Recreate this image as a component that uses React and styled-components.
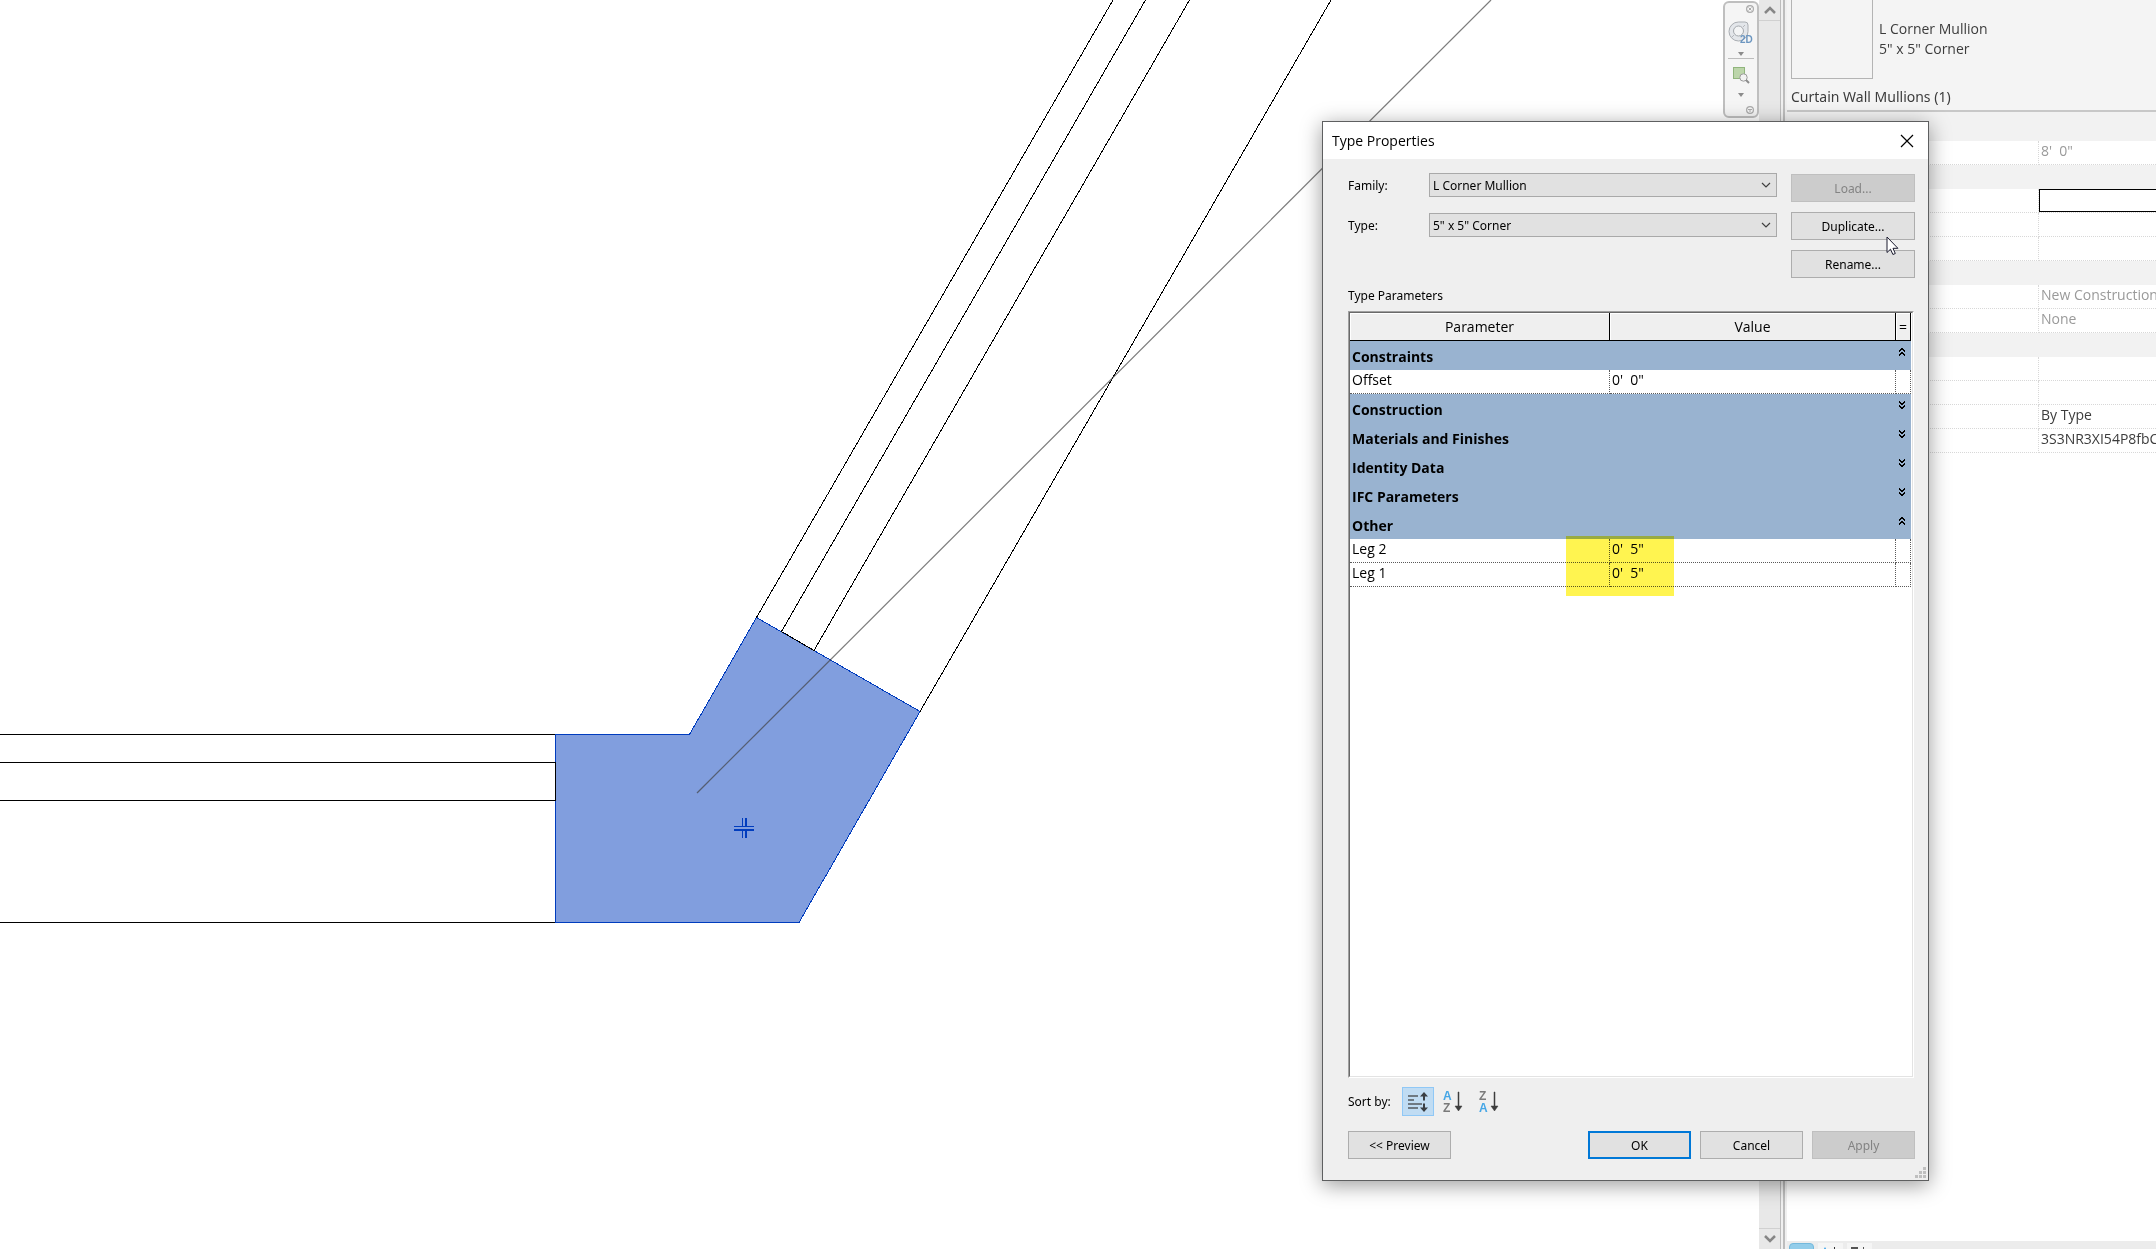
import React, { useState } from 'react';
import styled, { createGlobalStyle } from 'styled-components';

const GlobalStyle = createGlobalStyle`
  * {
    box-sizing: border-box;
  }

  body {
    margin: 0;
    overflow: hidden;
    background: #fff;
    color: #000;
    font-family: 'Open Sans', 'Noto Sans', sans-serif;
    font-size: 14px;
  }

  button, select, input {
    margin: 0;
    padding: 0;
    border: 0;
    border-radius: 0;
    font: inherit;
    color: inherit;
  }
`;

const Workspace = styled.div`
  position: relative;
  display: flex;
  height: 100vh;
  overflow: hidden;
`;

/* drawing area */

const Canvas = styled.main`
  flex: 1;
  min-width: 0;
  display: flex;
  justify-content: space-between;
  overflow: hidden;
`;

const Drawing = styled.svg`
  flex: 1;
  min-width: 0;
  height: 100%;
`;

const NavBar = styled.nav`
  flex: none;
  width: 36px;
  height: 117px;
  margin-top: 1px;
  display: flex;
  flex-direction: column;
  align-items: center;
  border: 2px solid #bfbfbf;
  border-radius: 6px;
  background: #f5f5f5;

  > :last-child {
    margin-top: auto;
  }
`;

const NavButton = styled.button`
  flex: none;
  display: flex;
  justify-content: ${props => props.$end ? 'flex-end' : 'center'};
  align-items: center;
  width: 100%;
  height: ${props => props.$height}px;
  padding-right: ${props => props.$end ? 3 : 0}px;
  background: none;
`;

const NavRule = styled.hr`
  flex: none;
  width: 26px;
  height: 1px;
  margin: 0;
  border: 0;
  background: #bdbdbd;
`;

const ScrollTrack = styled.div`
  flex: none;
  width: 22px;
  display: flex;
  flex-direction: column;
  justify-content: space-between;
  border-right: 1px solid #bcbcbc;
  background: #e8e8e8;
`;

const ScrollButton = styled.button`
  height: 21px;
  display: flex;
  align-items: center;
  justify-content: center;
  background: #e8e8e8;
  border-top: ${props => props.$down ? '1px solid #d0d0d0' : '0'};
  border-bottom: ${props => props.$down ? '0' : '1px solid #d0d0d0'};
`;

const Splitter = styled.div`
  flex: none;
  width: 6px;
  border: 2px solid #f0f0f0;
  border-width: 0 2px;
  background: #bdbdbd;
`;

/* properties palette */

const Palette = styled.aside`
  flex: none;
  width: 369px;
  display: flex;
  flex-direction: column;
  color: #3c3c3c;
  overflow: hidden;
`;

const TypeSelector = styled.div`
  display: flex;
  height: 81px;
  padding-left: 4px;
  gap: 6px;
  background: #f4f4f4;
`;

const Thumbnail = styled.div`
  width: 82px;
  height: 79px;
  border: 1px solid #b4b4b4;
  border-top: 0;
`;

const TypeName = styled.div`
  padding-top: 19px;
  line-height: 20px;
`;

const Filter = styled.div`
  height: 31px;
  padding-left: 4px;
  line-height: 31px;
  font-family: 'Noto Sans', sans-serif;
  border-bottom: 2px solid #c8c8c8;
  background: #f4f4f4;
`;

const InstanceTable = styled.table`
  width: 100%;
  table-layout: fixed;
  border-spacing: 0;

  td {
    height: 24px;
    padding: 0 0 3px 2px;
    line-height: 20px;
    white-space: pre;
    overflow: hidden;
    border-bottom: 1px dotted #d8d8d8;
  }

  td:first-child {
    width: 252px;
    border-right: 1px dotted #d8d8d8;
  }
`;

const InstanceHeading = styled.tr`
  td, td:first-child {
    height: ${props => props.$tall ? 29 : 24}px;
    background: #f2f2f2;
    border: 0;
  }
`;

const InstanceValue = styled.td`
  color: ${props => props.$muted ? '#9a9a9a' : '#3c3c3c'};
`;

const InstanceCell = styled.td`
  && {
    padding: 0;
  }
`;

const InstanceInput = styled.input`
  display: block;
  width: 140px;
  height: 23px;
  border: 1px solid #000;
  background: #fff;
`;

const PaletteFooter = styled.div`
  display: flex;
  gap: 4px;
  height: 8px;
  margin-top: auto;
  padding: 2px 2px 0;
  background: #ececec;
`;

const FooterButton = styled.button`
  width: 25px;
  height: 24px;
  display: flex;
  padding: 4px 4px 0;
  background: ${props => props.$active ? '#93cdea' : '#f5f5f5'};
  border: ${props => props.$active ? '1px solid #74b9dc' : '0'};
  border-radius: ${props => props.$active ? 4 : 0}px;
`;

/* dialog */

const Dialog = styled.section`
  position: absolute;
  top: 121px;
  right: 227px;
  bottom: 68px;
  width: 607px;
  display: flex;
  flex-direction: column;
  border: 1px solid #5e5f60;
  background: #efefef;
  box-shadow: 0 4px 20px rgba(0, 0, 0, 0.4);
  font-family: 'Noto Sans', sans-serif;
  font-size: 12px;
`;

const TitleBar = styled.header`
  display: flex;
  align-items: center;
  justify-content: space-between;
  height: 37px;
  padding: 0 14px 0 9px;
  background: #fff;
`;

const Title = styled.h1`
  margin: 0;
  font-family: 'Open Sans', sans-serif;
  font-size: 14px;
  font-weight: 400;
`;

const CloseButton = styled.button`
  display: flex;
  background: none;
`;

const Body = styled.div`
  flex: 1;
  min-height: 0;
  display: flex;
  flex-direction: column;
  padding: 14px 13px 21px 25px;
`;

const TypeSection = styled.div`
  display: flex;
  gap: 14px;
`;

const Fields = styled.div`
  flex: 1;
  display: flex;
  flex-direction: column;
  gap: 16px;
`;

const Field = styled.div`
  display: flex;
  align-items: center;
  height: 24px;
`;

const FieldLabel = styled.label`
  width: 81px;
`;

const SelectBox = styled.div`
  flex: 1;
  height: 24px;
  display: grid;
  align-items: center;
  border: 1px solid #a9a9a9;
  background: #e1e1e1;

  > * {
    grid-area: 1 / 1;
  }

  > svg {
    justify-self: end;
    margin-right: 5px;
    pointer-events: none;
  }
`;

const Select = styled.select`
  appearance: none;
  height: 22px;
  padding-left: 3px;
  background: none;
  outline: none;
`;

const TypeButtons = styled.div`
  display: flex;
  flex-direction: column;
  gap: 10px;
  width: 124px;
  padding-top: 1px;
`;

const Button = styled.button`
  width: ${props => props.$wide ? 124 : 103}px;
  height: 28px;
  background: #e1e1e1;
  border: ${props => props.$primary ? '2px solid #0078d7' : '1px solid #adadad'};

  &:disabled {
    color: #838383;
    background: #cccccc;
    border-color: #bfbfbf;
  }
`;

const TableLabel = styled.div`
  margin: 8px 0 5px;
  line-height: 20px;
`;

const TableFrame = styled.div`
  position: relative;
  flex: 1;
  min-height: 0;
  margin-right: 1px;
  border: 1px solid;
  border-color: #a0a0a0 #fff #fff #a0a0a0;
  background: #fff;
`;

const TableInner = styled.div`
  height: 100%;
  border: 1px solid;
  border-color: #696969 #e3e3e3 #e3e3e3 #696969;
  font-family: 'Open Sans', sans-serif;
  font-size: 14px;
`;

const ParamTable = styled.table`
  width: 561px;
  table-layout: fixed;
  border-spacing: 0;
  line-height: 20px;

  th, td {
    padding: 0;
    text-align: left;
    font-weight: 400;
    white-space: pre;
  }
`;

const NameCol = styled.col`
  width: 260px;
`;

const FormulaCol = styled.col`
  width: 15px;
`;

const HeadRow = styled.tr`
  height: 28px;

  && th {
    text-align: center;
    background: #efefef;
    border-right: 1px solid #000;
    border-bottom: 1px solid #000;
    box-shadow: inset 1px 1px #fff;
  }
`;

const GroupRow = styled.tr`
  height: 29px;
  background: #99b3d0;

  && th {
    padding: 3px 0 0 2px;
    font-weight: 700;
  }

  td {
    vertical-align: top;
  }
`;

const ParamRow = styled.tr`
  height: 24px;

  && th, && td {
    padding: 0 0 3px 2px;
    border-right: 1px dotted #5a5a5a;
    border-bottom: 1px dotted #5a5a5a;
  }
`;

const ToggleButton = styled.button`
  display: flex;
  padding: 7px 3px 0;
  background: none;
`;

const Highlight = styled.div`
  position: absolute;
  top: 224px;
  left: 217px;
  width: 108px;
  height: 60px;
  background: #fff450;
  mix-blend-mode: multiply;
  pointer-events: none;
`;

const SortBar = styled.div`
  display: flex;
  align-items: center;
  gap: 4px;
  margin-top: 9px;
`;

const SortLabel = styled.span`
  width: 50px;
`;

const SortButton = styled.button`
  width: 32px;
  height: 29px;
  display: flex;
  align-items: center;
  justify-content: center;
  background: ${props => props.$active ? '#c0dcf3' : 'none'};
  border: 1px solid ${props => props.$active ? '#90c8f6' : 'transparent'};
`;

const SortGlyph = styled.svg`
  overflow: visible;
  font-family: 'Liberation Sans', sans-serif;
  font-size: 12px;
  font-weight: 700;
`;

const Footer = styled.footer`
  display: flex;
  gap: 9px;
  margin-top: 15px;

  > :first-child {
    margin-right: auto;
  }
`;

const Grip = styled.svg`
  position: absolute;
  right: 2px;
  bottom: 2px;
`;

const Pointer = styled.svg`
  position: absolute;
  top: 114px;
  left: 563px;
  pointer-events: none;
`;

const GROUPS = [
  { name: 'Constraints', open: true, params: [['Offset', "0'  0\""]] },
  { name: 'Construction', open: false, params: [] },
  { name: 'Materials and Finishes', open: false, params: [] },
  { name: 'Identity Data', open: false, params: [] },
  { name: 'IFC Parameters', open: false, params: [] },
  { name: 'Other', open: true, params: [['Leg 2', "0'  5\""], ['Leg 1', "0'  5\""]] },
];

const INSTANCE_ROWS = [
  { heading: true, tall: true },
  { value: "8'  0\"", muted: true },
  { heading: true },
  { edit: true },
  {},
  {},
  { heading: true },
  { value: 'New Construction', muted: true },
  { value: 'None', muted: true },
  { heading: true },
  {},
  {},
  { value: 'By Type' },
  { value: '3S3NR3XI54P8fbC' },
];

const MullionPlan = () => (
  <Drawing role="img" aria-label="Floor plan">
    <path
      d="M555.5 734.5H689.5L756.5 617.5L920 711.5L799 922.5H555.5Z"
      fill="#819ede"
      stroke="#003cbe"
      shapeRendering="crispEdges"
    />
    <g fill="none" stroke="#000" shapeRendering="crispEdges">
      <path d="M0 734.5H555M0 762.5H555.5V800.5H0M0 922.5H555" />
      <path d="M756.5 617.5L1113 0M1145.5 0L781.5 631.5L814 650.5L1189.5 0M920 711.5L1331 0" />
    </g>
    <path d="M697 793L1491 0" stroke="#404040" strokeOpacity="0.68" strokeWidth="1.2" />
    <path
      d="M734 826h20v1h-20zM734 829h20v2h-20zM742 818h1v8h-1zM745 818h2v8h-2zM742 831h1v7h-1zM745 831h2v7h-2z"
      fill="#003cbe"
      shapeRendering="crispEdges"
    />
  </Drawing>
);

const DropArrow = () => (
  <svg width="6" height="4" viewBox="0 0 6 4">
    <path d="M0 0h6L3 4z" fill="#8b8b8b" />
  </svg>
);

const NavigationBar = () => (
  <NavBar aria-label="Navigation bar">
    <NavButton $height={11} $end aria-label="Close">
      <svg width="8" height="8" viewBox="0 0 8 8" fill="none" stroke="#ababab">
        <circle cx="4" cy="4" r="3.4" strokeWidth="1.2" />
        <path d="M2.5 2.5l3 3M5.5 2.5l-3 3" />
      </svg>
    </NavButton>
    <NavButton $height={35} aria-label="Steering wheel 2D">
      <svg width="26" height="27" viewBox="0 0 26 27" fill="none">
        <path
          d="M10.5 4H17q3 0 3 3V13.5A9.5 9.5 0 1 1 10.500 4Z"
          fill="#e3e6ea"
          stroke="#a9adb2"
        />
        <circle cx="10.5" cy="13" r="5" fill="#f3f4f5" stroke="#a4a8ad" />
        <path d="M6 17l-2 2M15 9l2-2" stroke="#b5b8bd" />
        <text x="12" y="25" fill="#6c96c0" fontSize="10" fontWeight="700" fontFamily="Liberation Sans, sans-serif">2D</text>
      </svg>
    </NavButton>
    <NavButton $height={9} aria-label="Wheel options"><DropArrow /></NavButton>
    <NavRule />
    <NavButton $height={31} aria-label="Zoom in region">
      <svg width="18" height="18" viewBox="0 0 18 18" fill="none">
        <rect x="1.5" y="1.5" width="11" height="11" fill="#bcd5aa" stroke="#90b57c" />
        <circle cx="11.5" cy="11.5" r="3.7" fill="#f2f2f2" stroke="#9b9b9b" />
        <path d="M14 14l3 3" stroke="#8d8d8d" strokeWidth="2" />
      </svg>
    </NavButton>
    <NavButton $height={9} aria-label="Zoom options"><DropArrow /></NavButton>
    <NavButton $height={12} $end aria-label="Customize">
      <svg width="8" height="8" viewBox="0 0 8 8" fill="none" stroke="#ababab">
        <circle cx="4" cy="4" r="3.4" strokeWidth="1.2" />
        <path d="M2 3.5h4M3 5h2" />
      </svg>
    </NavButton>
  </NavBar>
);

const PropertiesPalette = () => (
  <Palette>
    <TypeSelector>
      <Thumbnail />
      <TypeName>
        L Corner Mullion
        <br />
        5" x 5" Corner
      </TypeName>
    </TypeSelector>
    <Filter>Curtain Wall Mullions (1)</Filter>
    <InstanceTable>
      <tbody>
        {INSTANCE_ROWS.map((row, i) => row.heading ? (
          <InstanceHeading key={i} $tall={row.tall}><td /><td /></InstanceHeading>
        ) : (
          <tr key={i}>
            <td />
            {row.edit
              ? <InstanceCell><InstanceInput aria-label="Value" /></InstanceCell>
              : <InstanceValue $muted={row.muted}>{row.value}</InstanceValue>}
          </tr>
        ))}
      </tbody>
    </InstanceTable>
    <PaletteFooter>
      <FooterButton $active aria-label="Default order" />
      <FooterButton aria-label="Ascending">
        <svg width="18" height="6"><path d="M2 2L3 0L4 2z" fill="#2a9be8" /><path d="M12 0h1v6h-1z" fill="#333" /></svg>
      </FooterButton>
      <FooterButton aria-label="Descending">
        <svg width="18" height="6"><path d="M0 0h7v2H0zM12 0h1v6h-1z" fill="#555" /></svg>
      </FooterButton>
    </PaletteFooter>
  </Palette>
);

const SelectField = ({ id, label, value }) => (
  <Field>
    <FieldLabel htmlFor={id}>{label}</FieldLabel>
    <SelectBox>
      <Select id={id} defaultValue={value}>
        <option>{value}</option>
      </Select>
      <svg width="10" height="6" viewBox="0 0 10 6">
        <path d="M1 1l4 4l4-4" fill="none" stroke="#404040" strokeWidth="1.2" />
      </svg>
    </SelectBox>
  </Field>
);

const DoubleChevron = ({ open }) => (
  <svg width="6" height="8" viewBox="0 0 6 8" shapeRendering="crispEdges">
    <path
      d={open
        ? 'M2 0h2v1h1v1h1v2h-1v-1h-1v-1h-2v1h-1v1h-1v-2h1v-1h1zM2 4h2v1h1v1h1v2h-1v-1h-1v-1h-2v1h-1v1h-1v-2h1v-1h1z'
        : 'M0 0h1v1h1v1h2v-1h1v-1h1v2h-1v1h-1v1h-2v-1h-1v-1h-1zM0 4h1v1h1v1h2v-1h1v-1h1v2h-1v1h-1v1h-2v-1h-1v-1h-1z'}
    />
  </svg>
);

const letterColor = (letter) => letter === 'A' ? '#45a6e6' : '#7a7a7a';

const AlphaIcon = ({ first, second }) => (
  <SortGlyph width="22" height="22" viewBox="0 0 22 22">
    <text x="0" y="9" fill={letterColor(first)}>{first}</text>
    <text x="0" y="21" fill={letterColor(second)}>{second}</text>
    <path d="M15 1h1v14h3l-3.5 5l-3.5-5h3z" fill="#3d3d3d" stroke="#3d3d3d" strokeWidth="0.5" />
  </SortGlyph>
);

const TypeProperties = () => {
  const [groups, setGroups] = useState(GROUPS);
  const [sort, setSort] = useState('default');

  const toggle = (name) => {
    setGroups(groups.map(g => g.name === name ? { ...g, open: !g.open } : g));
  };

  return (
    <Dialog role="dialog" aria-label="Type Properties">
      <TitleBar>
        <Title>Type Properties</Title>
        <CloseButton aria-label="Close">
          <svg width="14" height="14" viewBox="0 0 14 14">
            <path d="M1 1l12 12M13 1L1 13" stroke="#000" strokeWidth="1.2" />
          </svg>
        </CloseButton>
      </TitleBar>
      <Body>
        <TypeSection>
          <Fields>
            <SelectField id="family" label="Family:" value="L Corner Mullion" />
            <SelectField id="type" label="Type:" value={'5" x 5" Corner'} />
          </Fields>
          <TypeButtons>
            <Button $wide disabled>Load...</Button>
            <Button $wide>Duplicate...</Button>
            <Button $wide>Rename...</Button>
          </TypeButtons>
        </TypeSection>
        <TableLabel>Type Parameters</TableLabel>
        <TableFrame>
          <TableInner>
            <ParamTable>
              <colgroup>
                <NameCol />
                <col />
                <FormulaCol />
              </colgroup>
              <thead>
                <HeadRow>
                  <th>Parameter</th>
                  <th>Value</th>
                  <th>=</th>
                </HeadRow>
              </thead>
              <tbody>
                {groups.map(group => (
                  <React.Fragment key={group.name}>
                    <GroupRow>
                      <th colSpan={2}>{group.name}</th>
                      <td>
                        <ToggleButton aria-label={group.name} onClick={() => toggle(group.name)}>
                          <DoubleChevron open={group.open} />
                        </ToggleButton>
                      </td>
                    </GroupRow>
                    {group.open && group.params.map(([name, value]) => (
                      <ParamRow key={name}>
                        <th>{name}</th>
                        <td>{value}</td>
                        <td />
                      </ParamRow>
                    ))}
                  </React.Fragment>
                ))}
              </tbody>
            </ParamTable>
          </TableInner>
          <Highlight />
        </TableFrame>
        <SortBar>
          <SortLabel>Sort by:</SortLabel>
          <SortButton $active={sort === 'default'} aria-label="Default" onClick={() => setSort('default')}>
            <svg width="20" height="20" viewBox="0 0 20 20">
              <path d="M0 4h10M0 8h6M0 12h14M0 16h10" stroke="#6f7a83" strokeWidth="1.8" />
              <path d="M16 0l4 4.5h-3v4h-2v-4h-3zM16 20l4-4.5h-3v-4h-2v4h-3z" fill="#3a3f44" />
            </svg>
          </SortButton>
          <SortButton $active={sort === 'asc'} aria-label="Ascending" onClick={() => setSort('asc')}>
            <AlphaIcon first="A" second="Z" />
          </SortButton>
          <SortButton $active={sort === 'desc'} aria-label="Descending" onClick={() => setSort('desc')}>
            <AlphaIcon first="Z" second="A" />
          </SortButton>
        </SortBar>
        <Footer>
          <Button>&lt;&lt; Preview</Button>
          <Button $primary>OK</Button>
          <Button>Cancel</Button>
          <Button disabled>Apply</Button>
        </Footer>
      </Body>
      <Grip width="11" height="11" viewBox="0 0 11 11">
        <path d="M8 0h3v3h-3zM4 4h3v3h-3zM8 4h3v3h-3zM0 8h3v3h-3zM4 8h3v3h-3zM8 8h3v3h-3z" fill="#bfbfbf" />
      </Grip>
      <Pointer width="13" height="20" viewBox="0 0 13 20">
        <path d="M1 1v15.5l3.5-3.3l2.4 5.3l2.4-1l-2.3-5.2h4.9z" fill="#fff" stroke="#1a1a2e" />
      </Pointer>
    </Dialog>
  );
};

const App = () => (
  <>
    <GlobalStyle />
    <Workspace>
      <Canvas>
        <MullionPlan />
        <NavigationBar />
      </Canvas>
      <ScrollTrack>
        <ScrollButton aria-label="Scroll up">
          <svg width="12" height="8" viewBox="0 0 12 8">
            <path d="M1 7l5-5l5 5" fill="none" stroke="#868686" strokeWidth="2.5" />
          </svg>
        </ScrollButton>
        <ScrollButton $down aria-label="Scroll down">
          <svg width="12" height="8" viewBox="0 0 12 8">
            <path d="M1 1l5 5l5-5" fill="none" stroke="#868686" strokeWidth="2.5" />
          </svg>
        </ScrollButton>
      </ScrollTrack>
      <Splitter />
      <PropertiesPalette />
      <TypeProperties />
    </Workspace>
  </>
);

export default App;
